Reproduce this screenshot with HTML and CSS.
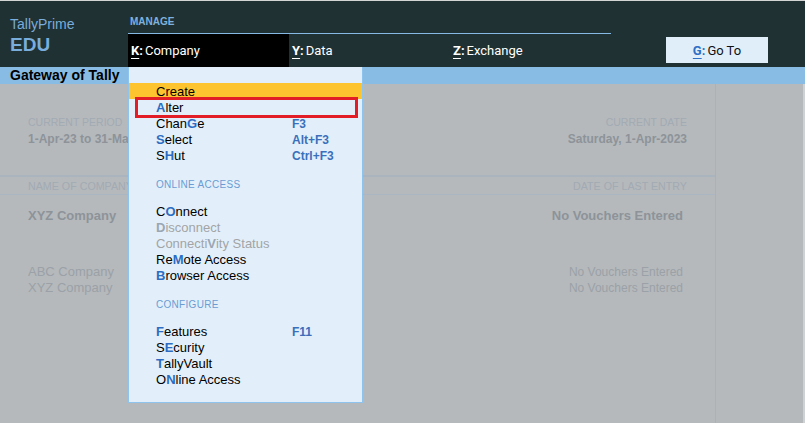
FILE: index.html
```html
<!DOCTYPE html>
<html lang="en">
<head>
    <meta charset="UTF-8">
    <title>TallyPrime EDU</title>
    <link rel="stylesheet" href="styles.css">
</head>
<body>
    <div class="topline"></div>
    <header class="header">
        <div class="brand">
            <div class="brand-name">TallyPrime</div>
            <div class="brand-edu">EDU</div>
        </div>
        <nav class="nav">
            <div class="nav-label">MANAGE</div>
            <div class="nav-items">
                <div class="nav-item active"><u>K</u><b>:</b> Company</div>
                <div class="nav-item"><u>Y</u><b>:</b> Data</div>
                <div class="nav-item"><u>Z</u><b>:</b> Exchange</div>
            </div>
        </nav>
        <div class="goto"><u>G</u><b>:</b> Go To</div>
    </header>
    <div class="subbar">Gateway of Tally</div>

    <main class="main">
        <div class="content">
            <div class="period">
                <div class="info">
                    <div class="label">CURRENT PERIOD</div>
                    <div class="value">1-Apr-23 to 31-Mar-24</div>
                </div>
                <div class="info right">
                    <div class="label">CURRENT DATE</div>
                    <div class="value">Saturday, 1-Apr-2023</div>
                </div>
            </div>
            <div class="table-head">
                <span>NAME OF COMPANY</span>
                <span>DATE OF LAST ENTRY</span>
            </div>
            <div class="row current">
                <span>XYZ Company</span>
                <span>No Vouchers Entered</span>
            </div>
            <div class="others">
                <div class="row"><span>ABC Company</span><span class="last">No Vouchers Entered</span></div>
                <div class="row"><span>XYZ Company</span><span class="last">No Vouchers Entered</span></div>
            </div>
        </div>
        <div class="side"></div>
    </main>

    <div class="dropdown">
        <div class="dd-item selected"><span>Create</span></div>
        <div class="dd-item boxed"><span><i>A</i>lter</span></div>
        <div class="dd-item"><span>Chan<i>G</i>e</span><kbd>F3</kbd></div>
        <div class="dd-item"><span><i>S</i>elect</span><kbd>Alt+F3</kbd></div>
        <div class="dd-item"><span>S<i>H</i>ut</span><kbd>Ctrl+F3</kbd></div>

        <div class="dd-section">ONLINE ACCESS</div>
        <div class="dd-item"><span>C<i>O</i>nnect</span></div>
        <div class="dd-item disabled"><span><i>D</i>isconnect</span></div>
        <div class="dd-item disabled"><span>Connecti<i>V</i>ity Status</span></div>
        <div class="dd-item"><span>Re<i>M</i>ote Access</span></div>
        <div class="dd-item"><span><i>B</i>rowser Access</span></div>

        <div class="dd-section">CONFIGURE</div>
        <div class="dd-item"><span><i>F</i>eatures</span><kbd>F11</kbd></div>
        <div class="dd-item"><span>S<i>E</i>curity</span></div>
        <div class="dd-item"><span><i>T</i>allyVault</span></div>
        <div class="dd-item"><span>O<i>N</i>line Access</span></div>
    </div>
</body>
</html>
```

FILE: styles.css
```css
* {
    margin: 0;
    padding: 0;
    box-sizing: border-box;
}

body {
    width: 805px;
    height: 423px;
    overflow: hidden;
    position: relative;
    background: #b5b9bc;
    font-family: 'Liberation Sans', Arial, sans-serif;
    font-size: 13px;
    color: #000;
}

.topline {
    height: 1px;
    background: #d3d5d5;
}

/* header */
.header {
    height: 66px;
    background: #203133;
    display: flex;
}

.brand {
    width: 128px;
    padding: 15px 0 0 10px;
    color: #79addb;
}

.brand-name {
    font-size: 14px;
    line-height: 17px;
}

.brand-edu {
    font-size: 19px;
    font-weight: bold;
    line-height: 24px;
}

.nav {
    width: 483px;
    padding-top: 15px;
}

.nav-label {
    font-size: 10px;
    font-weight: bold;
    line-height: 12px;
    color: #7db1de;
    padding: 0 0 5px 2px;
    border-bottom: 1px solid #86b9e3;
}

.nav-items {
    display: flex;
    height: 33px;
}

.nav-item {
    width: 161px;
    display: flex;
    align-items: center;
    padding-left: 3px;
    color: #fff;
    font-family: Roboto, 'Liberation Sans', sans-serif;
    font-size: 13px;
}

.nav-item u,
.goto u {
    font-weight: bold;
    text-underline-offset: 3px;
}

.nav-item b,
.goto b {
    margin-right: 2px;
}

.nav-item.active {
    background: #000;
}

.goto {
    margin: 36px 0 0 55px;
    width: 102px;
    height: 26px;
    background: #e0eefa;
    display: flex;
    align-items: center;
    justify-content: center;
    font-family: Roboto, 'Liberation Sans', sans-serif;
    font-size: 13px;
    color: #111;
}

.goto u,
.goto b {
    color: #2f6fc4;
}

.subbar {
    height: 17px;
    background: #88bce4;
    padding-left: 10px;
    font-weight: bold;
    font-size: 14px;
    line-height: 17px;
}

/* background (dimmed) content */
.main {
    display: flex;
    height: 339px;
}

.content {
    width: 716px;
    border-right: 1px solid #abb1b6;
}

.side {
    flex: 1;
    border-right: 2px solid #cfd2d4;
}

.period {
    height: 93px;
    display: flex;
    justify-content: space-between;
    padding: 32px 28px 0;
    border-bottom: 2px solid #a9b4bf;
}

.info.right {
    text-align: right;
}

.label {
    font-size: 10.5px;
    line-height: 12px;
    color: #a2aab3;
}

.value {
    margin-top: 3px;
    font-size: 12px;
    font-weight: bold;
    line-height: 16px;
    color: #8d9399;
}

.table-head {
    height: 18px;
    display: flex;
    justify-content: space-between;
    align-items: center;
    padding: 0 28px;
    font-size: 10.7px;
    color: #a2aab3;
    border-bottom: 1px solid #aab6c1;
}

.row {
    display: flex;
    justify-content: space-between;
    align-items: baseline;
    padding: 0 32px 0 28px;
    line-height: 16px;
    color: #9ba1a7;
}

.row .last {
    font-size: 12px;
}

.row.current {
    margin-top: 13px;
    font-weight: bold;
    color: #8d9399;
}

.others {
    margin-top: 40px;
}

/* dropdown */
.dropdown {
    position: absolute;
    left: 128px;
    top: 67px;
    width: 235px;
    height: 336px;
    background: #e2effa;
    border: 1px solid #8ec3ee;
    border-top: none;
    padding-top: 16px;
}

.dd-item {
    position: relative;
    display: flex;
    height: 16px;
    line-height: 18px;
    padding-left: 27px;
    font-size: 13px;
}

.dd-item span {
    width: 136px;
}

.dd-item i {
    font-style: normal;
    font-weight: bold;
    color: #2d6cc2;
}

.dd-item kbd {
    font-family: inherit;
    font-size: 12px;
    font-weight: bold;
    color: #3b6fbb;
}

.dd-item.selected {
    background: #fec42f;
}

.dd-item.boxed::after {
    content: "";
    position: absolute;
    left: 6px;
    top: -2px;
    width: 223px;
    height: 21px;
    box-sizing: border-box;
    border: 3px solid #e21d26;
}

.dd-item.disabled {
    color: #a3a4a6;
}

.dd-item.disabled i {
    color: #9aa6b4;
}

.dd-section {
    margin: 14px 0 10px;
    padding-left: 27px;
    height: 16px;
    line-height: 16px;
    font-size: 10px;
    letter-spacing: 0.3px;
    color: #6b9cd3;
}
```
